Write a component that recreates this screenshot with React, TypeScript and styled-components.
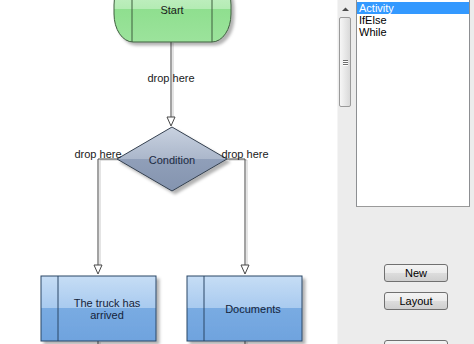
import React from "react";
import styled, { createGlobalStyle } from "styled-components";

const GlobalStyle = createGlobalStyle`
  html, body { margin: 0; padding: 0; background: #fff; }
  body { font-family: "Liberation Sans", Arial, sans-serif; font-size: 11px; }
`;

const Window = styled.div`
  display: flex;
  width: 474px;
  height: 344px;
  overflow: hidden;
  background: #fff;
`;

const Canvas = styled.div`
  width: 337px;
  height: 344px;
  flex: none;
  background: #fff;
`;

const DiagramSvg = styled.svg`
  display: block;
`;

const Label = styled.text<{ $color?: string }>`
  font-family: "Liberation Sans", Arial, sans-serif;
  font-size: 11px;
  fill: ${(p) => p.$color || "#1a1a1a"};
  text-anchor: middle;
  dominant-baseline: central;
`;

const VScroll = styled.div`
  width: 15px;
  flex: none;
  background: #ececec;
  display: flex;
  flex-direction: column;
  align-items: center;
  box-sizing: border-box;
  border-left: 1px solid #f5f5f5;
`;

const ScrollArrow = styled.div`
  height: 17px;
  width: 100%;
  flex: none;
  display: flex;
  align-items: center;
  justify-content: center;
`;

const Thumb = styled.div`
  width: 12px;
  height: 90px;
  flex: none;
  box-sizing: border-box;
  border: 1px solid #9a9a9a;
  border-radius: 2px;
  background: linear-gradient(to right, #f6f6f6, #e8e8e8 50%, #d9d9d9);
  display: flex;
  flex-direction: column;
  align-items: center;
  justify-content: center;
  gap: 1px;
`;

const GripLine = styled.div`
  width: 5px;
  height: 1px;
  background: #6d6d6d;
  box-shadow: 0 1px 0 #fff;
`;

const Side = styled.div`
  flex: 1;
  background: #ececec;
  display: flex;
  flex-direction: column;
  padding: 0 4px;
  overflow: hidden;
`;

const ListBox = styled.div`
  flex: none;
  margin-top: -1px;
  height: 208px;
  box-sizing: border-box;
  border: 1px solid #8d8f92;
  border-bottom-color: #9a9a9a;
  background: #fff;
  padding-top: 2px;
  display: flex;
  flex-direction: column;
`;

const ListItem = styled.div<{ $selected?: boolean }>`
  height: 12px;
  line-height: 12px;
  padding-left: 2px;
  font-family: "Liberation Sans", Arial, sans-serif;
  font-size: 11px;
  color: ${(p) => (p.$selected ? "#fff" : "#000")};
  background: ${(p) => (p.$selected ? "#3399ff" : "transparent")};
`;

const ButtonStack = styled.div`
  flex: none;
  display: flex;
  flex-direction: column;
  margin-left: 28px;
  margin-top: 57px;
`;

const Button = styled.button<{ $gap?: number }>`
  width: 64px;
  height: 18px;
  margin-top: ${(p) => p.$gap ?? 0}px;
  padding: 0;
  box-sizing: border-box;
  border: 1px solid #707070;
  border-radius: 3px;
  background: linear-gradient(#f3f3f3, #ebebeb 50%, #dddddd 50%, #cfcfcf);
  font-family: "Liberation Sans", Arial, sans-serif;
  font-size: 11px;
  color: #000;
  flex: none;
`;

const LINE = "#474747";
const SHADOW = "#c9c9c9";

function Connector({ d }: { d: string }) {
  return (
    <g fill="none">
      <path d={d} stroke={SHADOW} strokeWidth={1} transform="translate(2,1)" />
      <path d={d} stroke={LINE} strokeWidth={1} />
    </g>
  );
}

function Arrow({ x, y }: { x: number; y: number }) {
  return (
    <polygon
      points={`${x - 4},${y} ${x + 4},${y} ${x},${y + 9}`}
      fill="#fff"
      stroke={LINE}
      strokeWidth={1}
    />
  );
}

function ProcessBox({ x, lines }: { x: number; lines: string[] }) {
  const y = 276;
  const w = 115;
  const h = 65;
  const cx = x + 17 + (w - 17) / 2;
  const cy = y + h / 2;
  return (
    <g>
      <rect x={x} y={y} width={w} height={h} fill="url(#gBlue)" stroke="#2a4666" filter="url(#shadow)" />
      <line x1={x + 17} y1={y} x2={x + 17} y2={y + h} stroke="#2a4666" />
      {lines.map((t, i) => (
        <Label key={t} x={cx} y={cy + (i - (lines.length - 1) / 2) * 12} $color="#14233a">
          {t}
        </Label>
      ))}
    </g>
  );
}

function Diagram() {
  return (
    <DiagramSvg width={337} height={344} viewBox="0 0 337 344">
      <defs>
        <linearGradient id="gGreen" x1="0" y1="0" x2="0" y2="1">
          <stop offset="0" stopColor="#d2f4d2" />
          <stop offset="0.5" stopColor="#b3ebb3" />
          <stop offset="0.5" stopColor="#8fdf8f" />
          <stop offset="1" stopColor="#9ce39c" />
        </linearGradient>
        <linearGradient id="gBlue" x1="0" y1="0" x2="0" y2="1">
          <stop offset="0" stopColor="#c6ddf5" />
          <stop offset="0.5" stopColor="#a8caef" />
          <stop offset="0.5" stopColor="#79abe2" />
          <stop offset="1" stopColor="#6fa3de" />
        </linearGradient>
        <linearGradient id="gSlate" x1="0" y1="0" x2="0" y2="1">
          <stop offset="0" stopColor="#c9d2e0" />
          <stop offset="0.5" stopColor="#abb7cb" />
          <stop offset="0.5" stopColor="#909fb9" />
          <stop offset="1" stopColor="#8494af" />
        </linearGradient>
        <filter id="shadow" x="-10%" y="-10%" width="130%" height="130%">
          <feDropShadow dx="3" dy="3" stdDeviation="1.5" floodColor="#000" floodOpacity="0.3" />
        </filter>
      </defs>

      {/* connectors */}
      <Connector d="M171 42 V117" />
      <Arrow x={171} y={117} />
      <Connector d="M117 159 H98 V265" />
      <Arrow x={98} y={265} />
      <Connector d="M227 159 H245 V265" />
      <Arrow x={245} y={265} />
      <Connector d="M98 341 V346" />
      <Connector d="M245 341 V346" />

      {/* start terminator */}
      <g>
        <rect x={114} y={-23} width={117} height={65} rx={19} ry={28} fill="url(#gGreen)" stroke="#3e5e3e" filter="url(#shadow)" />
        <line x1={132} y1={-23} x2={132} y2={42} stroke="#3e5e3e" />
        <line x1={212} y1={-23} x2={212} y2={42} stroke="#3e5e3e" />
        <Label x={172} y={10} $color="#1b1b1b">Start</Label>
      </g>

      {/* decision */}
      <g>
        <polygon points="172,127 227,159 172,191 117,159" fill="url(#gSlate)" stroke="#34404f" filter="url(#shadow)" />
        <Label x={172} y={160} $color="#1c2a42">Condition</Label>
      </g>

      <ProcessBox x={41} lines={["The truck has", "arrived"]} />
      <ProcessBox x={187} lines={["Documents"]} />

      {/* drop labels */}
      <Label x={171} y={78}>drop here</Label>
      <Label x={98} y={154}>drop here</Label>
      <Label x={245} y={154}>drop here</Label>
    </DiagramSvg>
  );
}

export default function App() {
  return (
    <>
      <GlobalStyle />
      <Window>
        <Canvas>
          <Diagram />
        </Canvas>
        <VScroll>
          <ScrollArrow>
            <svg width="7" height="4" viewBox="0 0 7 4">
              <path d="M0 4 L3.5 0.5 L7 4 Z" fill="#4a4a4a" />
            </svg>
          </ScrollArrow>
          <Thumb>
            <GripLine />
            <GripLine />
            <GripLine />
          </Thumb>
        </VScroll>
        <Side>
          <ListBox>
            <ListItem $selected>Activity</ListItem>
            <ListItem>IfElse</ListItem>
            <ListItem>While</ListItem>
          </ListBox>
          <ButtonStack>
            <Button>New</Button>
            <Button $gap={10}>Layout</Button>
            <Button $gap={30}>&nbsp;</Button>
          </ButtonStack>
        </Side>
      </Window>
    </>
  );
}
